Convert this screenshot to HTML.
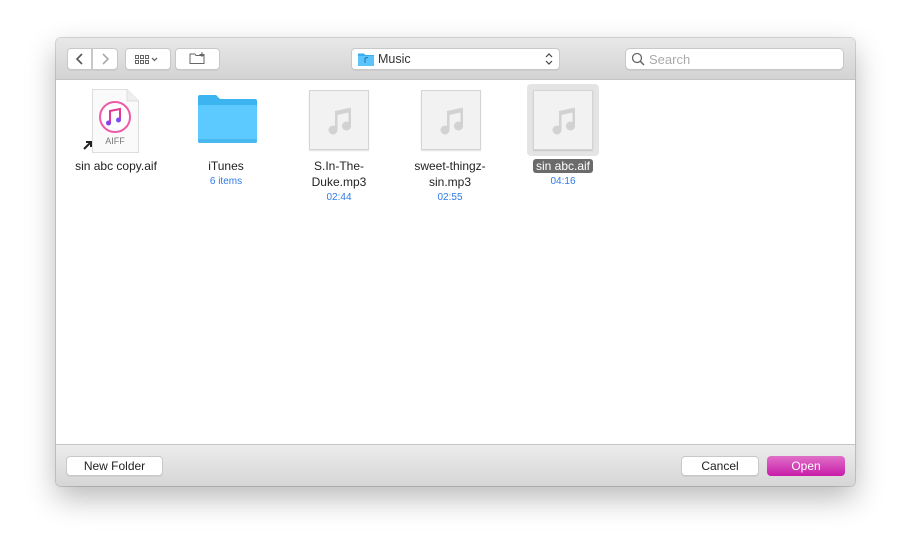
<!DOCTYPE html>
<html><head><meta charset="utf-8">
<style>
*{box-sizing:border-box;margin:0;padding:0}
body{width:911px;height:560px;background:#fff;font-family:"Liberation Sans",sans-serif;position:relative;overflow:hidden}
.win{position:absolute;left:56px;top:38px;width:799px;height:448px;border-radius:5px;background:#fff;box-shadow:0 12px 30px rgba(0,0,0,.28),0 0 0 1px rgba(0,0,0,.15);overflow:hidden}
.tb{position:absolute;left:0;top:0;width:100%;height:42px;background:linear-gradient(#e8e8e8,#d3d3d3);border-bottom:1px solid #c4c4c4}
.btn{position:absolute;background:#fff;border:1px solid #c8c8c8;border-radius:4px;box-shadow:0 1px 0 rgba(0,0,0,.05)}
.ft{position:absolute;left:0;top:406px;width:100%;height:42px;background:linear-gradient(#ececec,#d6d6d6);border-top:1px solid #c4c4c4}
.it{position:absolute;text-align:center;font-size:12px;color:#222;line-height:16px}
.sub{font-size:10px;color:#2f7ae5;line-height:15px}
.doc{position:absolute;width:60px;height:60px;background:#f2f2f2;border:1px solid #d4d4d4;box-shadow:0 1px 1px rgba(0,0,0,.12)}
</style></head><body>
<div class="win">
 <div class="tb">
  <div class="btn" style="left:11px;top:10px;width:25px;height:22px;border-radius:4px 0 0 4px"></div>
  <div class="btn" style="left:36px;top:10px;width:26px;height:22px;border-radius:0 4px 4px 0"></div>
  <svg style="position:absolute;left:18px;top:14px" width="12" height="14"><path d="M8 2 L3 7 L8 12" stroke="#555" stroke-width="1.6" fill="none"/></svg>
  <svg style="position:absolute;left:43px;top:14px" width="12" height="14"><path d="M4 2 L9 7 L4 12" stroke="#aaa" stroke-width="1.6" fill="none"/></svg>
  <div class="btn" style="left:69px;top:10px;width:46px;height:22px"></div>
  <svg style="position:absolute;left:79px;top:17px" width="28" height="10"><g fill="none" stroke="#666" stroke-width="1"><rect x="0.5" y="0.5" width="3" height="3"/><rect x="5.5" y="0.5" width="3" height="3"/><rect x="10.5" y="0.5" width="3" height="3"/><rect x="0.5" y="5.5" width="3" height="3"/><rect x="5.5" y="5.5" width="3" height="3"/><rect x="10.5" y="5.5" width="3" height="3"/><path d="M17 3 L19.5 5.5 L22 3" stroke-width="1.3"/></g></svg>
  <div class="btn" style="left:119px;top:10px;width:45px;height:22px"></div>
  <svg style="position:absolute;left:133px;top:13px" width="18" height="14"><path d="M1 3 H6 L7 4.5 H15 V12.5 H1 Z" fill="none" stroke="#666"/><path d="M13 1 V6 M10.5 3.5 H15.5" stroke="#666"/></svg>
  <div class="btn" style="left:295px;top:10px;width:209px;height:22px"></div>
  <svg style="position:absolute;left:302px;top:14px" width="16" height="14"><path d="M0 1.5 H6 L7.5 3 H16 V14 H0 Z" fill="#3aaef0"/><rect x="0" y="4" width="16" height="10" fill="#5cc4fa"/><path d="M7 6 V11 M7 6 L10 5.5" stroke="#1a6fb0" stroke-width="1"/></svg>
  <div style="position:absolute;left:322px;top:14px;font-size:12.5px;color:#333">Music</div>
  <svg style="position:absolute;left:489px;top:13px" width="8" height="16"><path d="M1 6 L4 3 L7 6 M1 10 L4 13 L7 10" stroke="#444" fill="none" stroke-width="1.2"/></svg>
  <div class="btn" style="left:569px;top:10px;width:219px;height:22px;border-radius:5px"></div>
  <svg style="position:absolute;left:575px;top:14px" width="14" height="14"><circle cx="6" cy="6" r="4.5" fill="none" stroke="#666" stroke-width="1.3"/><path d="M9.3 9.3 L13 13" stroke="#666" stroke-width="1.5"/></svg>
  <div style="position:absolute;left:593px;top:14px;font-size:13px;color:#aaa">Search</div>
 </div>

 <svg style="position:absolute;left:35px;top:50px" width="50" height="66">
  <path d="M1.5 1.5 H36 L47.5 13 V64.5 H1.5 Z" fill="#fafafa" stroke="#ddd"/>
  <path d="M36 1.5 V13 H47.5" fill="#eee" stroke="#ddd"/>
  <circle cx="24" cy="29" r="15" fill="#fff" stroke="#ef5aa8" stroke-width="2"/>
  <path d="M19 35 V23 L29 21 V32" stroke="#e33a9a" stroke-width="2" fill="none"/>
  <circle cx="17.5" cy="35" r="2.5" fill="#8a3ee8"/><circle cx="27.5" cy="32" r="2.5" fill="#7a4ef0"/>
  <text x="24" y="56" font-size="9" fill="#777" text-anchor="middle" font-family="Liberation Sans">AIFF</text>
 </svg>
 <svg style="position:absolute;left:26px;top:101px" width="12" height="12"><path d="M2 10 L9 3 M4 3 H9 V8" stroke="#222" stroke-width="2" fill="none"/></svg>
 <div class="it" style="left:5px;top:120px;width:110px">sin abc copy.aif</div>

 <svg style="position:absolute;left:141px;top:57px" width="61" height="50"><path d="M1 2 Q1 0 3 0 H19 L23 4 H58 Q60 4 60 6 V46 Q60 48 58 48 H3 Q1 48 1 46 Z" fill="#3cb4f0"/><rect x="1" y="10" width="59" height="38" rx="2" fill="#5ccaff"/><rect x="1" y="44" width="59" height="4" rx="2" fill="#48b8ee"/></svg>
 <div class="it" style="left:120px;top:120px;width:100px">iTunes<div class="sub">6 items</div></div>

 <div class="doc" style="left:253px;top:52px"></div>
 <div class="doc" style="left:365px;top:52px"></div>
 <div style="position:absolute;left:471px;top:46px;width:72px;height:72px;background:#e4e4e4;border-radius:4px"></div>
 <div class="doc" style="left:477px;top:52px"></div>
 <svg style="position:absolute;left:270px;top:68px" width="28" height="30"><g fill="#d2d2d2"><path d="M9 5 L25 1.5 V20 H22.5 V6.5 L11.5 9 V24 H9 Z"/><circle cx="7" cy="24" r="4.5"/><circle cx="20.5" cy="20" r="4.5"/></g></svg>
 <svg style="position:absolute;left:382px;top:68px" width="28" height="30"><g fill="#d2d2d2"><path d="M9 5 L25 1.5 V20 H22.5 V6.5 L11.5 9 V24 H9 Z"/><circle cx="7" cy="24" r="4.5"/><circle cx="20.5" cy="20" r="4.5"/></g></svg>
 <svg style="position:absolute;left:494px;top:68px" width="28" height="30"><g fill="#d2d2d2"><path d="M9 5 L25 1.5 V20 H22.5 V6.5 L11.5 9 V24 H9 Z"/><circle cx="7" cy="24" r="4.5"/><circle cx="20.5" cy="20" r="4.5"/></g></svg>

 <div class="it" style="left:233px;top:120px;width:100px">S.In-The-<br>Duke.mp3<div class="sub">02:44</div></div>
 <div class="it" style="left:344px;top:120px;width:100px">sweet-thingz-<br>sin.mp3<div class="sub">02:55</div></div>
 <div class="it" style="left:457px;top:120px;width:100px"><span style="background:#6b6b6b;color:#fff;border-radius:3px;padding:0 3px">sin abc.aif</span><div class="sub">04:16</div></div>

 <div class="ft">
  <div class="btn" style="left:10px;top:11px;width:97px;height:20px;font-size:12px;text-align:center;line-height:18px;color:#222">New Folder</div>
  <div class="btn" style="left:625px;top:11px;width:78px;height:20px;font-size:12px;text-align:center;line-height:18px;color:#222">Cancel</div>
  <div style="position:absolute;left:711px;top:11px;width:78px;height:20px;border-radius:4px;background:linear-gradient(#e070c8,#c81ca8);font-size:12px;text-align:center;line-height:20px;color:#fff">Open</div>
 </div>
</div>
</body></html>
